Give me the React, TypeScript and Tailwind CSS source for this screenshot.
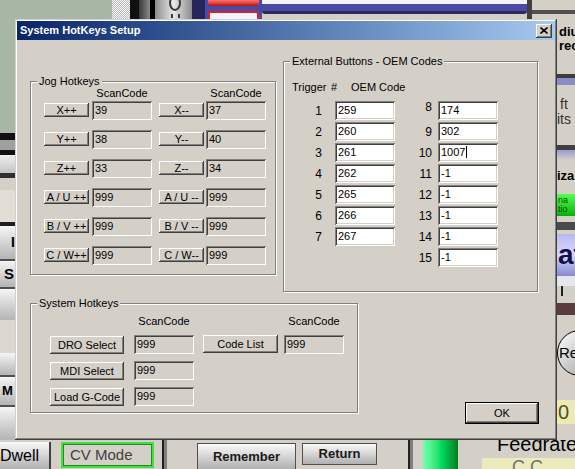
import type { ReactNode } from "react";

const raised =
  "shadow-[inset_-1px_-1px_0_#404040,inset_1px_1px_0_#ffffff,inset_-2px_-2px_0_#808080]";
const sunken =
  "shadow-[inset_1px_1px_0_#808080,inset_-1px_-1px_0_#ffffff,inset_2px_2px_0_#404040,inset_-2px_-2px_0_#d4d0c8]";

function Btn({ children, className = "" }: { children: ReactNode; className?: string }) {
  return (
    <button
      type="button"
      className={`flex shrink-0 items-center justify-center whitespace-nowrap bg-[#d4d0c8] text-[11px] leading-none text-black ${raised} ${className}`}
    >
      {children}
    </button>
  );
}

function Field({
  value,
  white = false,
  caret = false,
  className = "",
}: {
  value: string;
  white?: boolean;
  caret?: boolean;
  className?: string;
}) {
  return (
    <div
      className={`h-[19px] w-[60px] shrink-0 pl-[3px] text-[11px] leading-[19px] text-black ${
        white ? "bg-white" : "bg-[#d4d0c8]"
      } ${sunken} ${className}`}
    >
      {value}
      {caret && <span className="ml-px inline-block h-[12px] w-px bg-black align-[-2px]" />}
    </div>
  );
}

function GroupBox({
  label,
  className = "",
  children,
}: {
  label: string;
  className?: string;
  children: ReactNode;
}) {
  return (
    <div
      className={`relative shrink-0 border border-[#808080] shadow-[1px_1px_0_#ffffff,inset_1px_1px_0_#ffffff] ${className}`}
    >
      <span className="absolute -top-[7px] left-[6px] bg-[#d4d0c8] px-[2px] text-[11px] leading-[13px] whitespace-nowrap">
        {label}
      </span>
      {children}
    </div>
  );
}

const jogRows = [
  ["X++", "39", "X--", "37"],
  ["Y++", "38", "Y--", "40"],
  ["Z++", "33", "Z--", "34"],
  ["A / U ++", "999", "A / U --", "999"],
  ["B / V ++", "999", "B / V --", "999"],
  ["C / W++", "999", "C / W--", "999"],
];

const oemLeft = [
  ["1", "259"],
  ["2", "260"],
  ["3", "261"],
  ["4", "262"],
  ["5", "265"],
  ["6", "266"],
  ["7", "267"],
];

const oemRight = [
  ["8", "174"],
  ["9", "302"],
  ["10", "1007"],
  ["11", "-1"],
  ["12", "-1"],
  ["13", "-1"],
  ["14", "-1"],
  ["15", "-1"],
];

function TopStrip() {
  return (
    <div className="col-span-3 flex h-[19px] overflow-hidden">
      <div className="w-[112px] shrink-0 bg-[#a8b6a6]" />
      <div className="w-[18px] shrink-0 bg-[image:repeating-conic-gradient(#bdbdbd_0_25%,#f2f2f2_0_50%)] bg-[length:2px_2px]" />
      <div className="w-[9px] shrink-0 bg-[#111111]" />
      <div className="w-[11px] shrink-0 bg-linear-to-r from-[#3a3a3a] to-[#8a8a8a]" />
      <div className="w-[5px] shrink-0 bg-black" />
      <div className="w-[37px] shrink-0 bg-linear-to-r from-[#8c8c8c] via-[#e8e8e8] to-[#8c8c8c]">
        <svg width="37" height="19" viewBox="0 0 37 19">
          <ellipse cx="20" cy="3" rx="5" ry="7" fill="none" stroke="#3a3a3a" strokeWidth="2" />
          <rect x="16" y="14" width="2" height="4" fill="#3a3a3a" />
          <rect x="23" y="14" width="2" height="4" fill="#3a3a3a" />
        </svg>
      </div>
      <div className="w-[13px] shrink-0 bg-[#26265a]" />
      <div className="flex w-[57px] shrink-0 flex-col bg-[#4b4ba6] px-[3px]">
        <div className="h-[6px] rounded-b-[3px] bg-linear-to-b from-[#ff7070] to-[#c00000]" />
        <div className="mt-[5px] h-[8px] rounded-t-[3px] border-2 border-b-0 border-[#e02020] bg-[#f4f4ff]" />
      </div>
      <div className="flex w-[265px] shrink-0 flex-col">
        <div className="h-[4px] bg-[#f4f4f4]" />
        <div className="h-[7px] bg-[#4b4ba6]" />
        <div className="h-[3px] rounded-b-[3px] bg-[#2c2c5c]" />
        <div className="flex-1 bg-[#d4d0c8]" />
      </div>
      <div className="w-[5px] shrink-0 bg-[#404040]" />
      <div className="flex flex-1 flex-col bg-[#d4d0c8]">
        <div className="h-[10px]" />
        <div className="h-[4px] bg-[#505050]" />
      </div>
    </div>
  );
}

function LeftStrip() {
  const btn = "shrink-0 bg-linear-to-b from-[#f6f6f6] to-[#b4b4b4]";
  return (
    <div className="flex flex-col overflow-hidden whitespace-nowrap font-bold text-black">
      <div className="h-[114px] shrink-0 bg-[#a8b6a6]" />
      <div className="h-[7px] shrink-0 bg-[#111111]" />
      <div className="h-[10px] shrink-0 bg-[#a0a0a0]" />
      <div className="h-[5px] shrink-0 bg-[#111111]" />
      <div className="h-[18px] shrink-0 bg-linear-to-b from-[#eeeeee] to-[#c4c4c4]" />
      <div className="h-[5px] shrink-0 bg-[#303030]" />
      <div className="h-[12px] shrink-0 bg-[#d4d0c8]" />
      <div className="h-[32px] shrink-0 bg-[#e2ded6]" />
      <div className="h-[4px] shrink-0 bg-[#202020]" />
      <div className={`flex h-[33px] items-center justify-end text-[14px] ${btn}`}>I</div>
      <div className="h-[2px] shrink-0 bg-[#505050]" />
      <div className={`flex h-[26px] items-center pl-[4px] text-[15px] ${btn}`}>S</div>
      <div className="h-[2px] shrink-0 bg-[#505050]" />
      <div className={`h-[31px] ${btn}`} />
      <div className="h-[33px] shrink-0 bg-[#dcd8d0]" />
      <div className={`h-[22px] ${btn}`} />
      <div className="h-[2px] shrink-0 bg-[#505050]" />
      <div className={`flex h-[28px] items-center pl-[2px] text-[13px] ${btn}`}>M</div>
      <div className="h-[2px] shrink-0 bg-[#505050]" />
      <div className={`h-[33px] ${btn}`} />
    </div>
  );
}

function RightStrip() {
  return (
    <div className="flex flex-col overflow-hidden whitespace-nowrap bg-[#d4d0c8] text-black">
      <div className="h-[6px] shrink-0" />
      <div className="h-[14px] shrink-0 pl-[2px] text-[13px] font-bold leading-[14px]">diu</div>
      <div className="h-[14px] shrink-0 pl-[2px] text-[13px] font-bold leading-[14px]">rec</div>
      <div className="h-[21px] shrink-0" />
      <div className="h-[4px] shrink-0 bg-[#3c3c3c]" />
      <div className="h-[7px] shrink-0 bg-[#8c8cc8]" />
      <div className="h-[12px] shrink-0" />
      <div className="h-[14px] shrink-0 pl-[3px] text-[14px] leading-[14px] text-[#333333]">ft</div>
      <div className="h-[16px] shrink-0 text-[14px] leading-[16px] text-[#333333]">its</div>
      <div className="h-[18px] shrink-0" />
      <div className="h-[5px] shrink-0 bg-[#404040]" />
      <div className="h-[10px] shrink-0 bg-linear-to-b from-[#9a9ad0] to-[#d4d0c8]" />
      <div className="h-[8px] shrink-0" />
      <div className="h-[16px] shrink-0 text-[13px] font-bold leading-[16px]">iza</div>
      <div className="h-[10px] shrink-0" />
      <div className="flex h-[22px] shrink-0 flex-col justify-center bg-linear-to-b from-[#50ff50] to-[#00b000] pl-[1px] text-[9px] leading-[9px] text-[#005000]">
        <span>na</span>
        <span>tio</span>
      </div>
      <div className="h-[6px] shrink-0" />
      <div className="h-[8px] shrink-0 bg-[#4a4a4a]" />
      <div className="h-[4px] shrink-0" />
      <div className="flex h-[42px] shrink-0 items-center bg-linear-to-b from-[#b8b8f0] via-[#d8d8ff] to-[#8888d0] pl-[1px] text-[28px] font-bold text-[#101048]">
        at
      </div>
      <div className="h-[10px] shrink-0 bg-[#e6e6ec]" />
      <div className="flex h-[14px] shrink-0 items-start pl-[4px]">
        <div className="h-[10px] w-[2px] bg-[#202020]" />
      </div>
      <div className="h-[3px] shrink-0" />
      <div className="h-[12px] shrink-0 bg-[#5a3c3c]" />
      <div className="h-[13px] shrink-0" />
      <div className="flex h-[50px] shrink-0 items-center">
        <div className="flex h-[46px] w-[46px] shrink-0 items-center rounded-full border border-black bg-linear-to-br from-[#ffffff] to-[#9a9a9a] pl-[1px] text-[15px]">
          Re
        </div>
      </div>
      <div className="h-[22px] shrink-0" />
      <div className="flex h-[24px] shrink-0 items-center bg-[#ecebb4] pl-[1px] text-[20px] text-[#505020]">0</div>
      <div className="h-[16px] shrink-0" />
    </div>
  );
}

function BottomStrip() {
  const grad = "bg-linear-to-b from-[#fafafa] to-[#b0b0b0]";
  return (
    <div className="col-span-3 flex items-start overflow-hidden whitespace-nowrap bg-[#d4d0c8] text-black">
      <div className={`mt-[2px] flex h-[27px] w-[51px] shrink-0 items-center border-r-2 border-[#404040] text-[16px] ${grad}`}>
        Dwell
      </div>
      <div className="mt-[2px] ml-[10px] flex h-[26px] w-[93px] shrink-0 items-center border-2 border-[#40de40] pl-[7px] text-[15px] text-[#404040] shadow-[inset_1px_1px_0_#1e8e1e,inset_-1px_-1px_0_#1e8e1e]">
        CV Mode
      </div>
      <div className="ml-[8px] h-[29px] w-[2px] shrink-0 bg-[#202020]" />
      <div className="h-[29px] w-[3px] shrink-0 bg-[#808080]" />
      <div
        className={`mt-[3px] ml-[30px] flex h-[27px] w-[99px] shrink-0 items-center justify-center border border-[#505050] text-[13px] font-bold text-[#1a1a1a] ${grad}`}
      >
        Remember
      </div>
      <div
        className={`mt-[3px] ml-[6px] flex h-[22px] w-[75px] shrink-0 items-center justify-center border border-[#505050] text-[13px] font-bold text-[#1a1a1a] ${grad}`}
      >
        Return
      </div>
      <div className="ml-[31px] h-[29px] w-[2px] shrink-0 bg-[#202020]" />
      <div className="h-[29px] w-[3px] shrink-0 bg-[#808080]" />
      <div className="ml-[10px] h-[29px] w-[35px] shrink-0 bg-linear-to-r from-[#70ffb0] via-[#00e060] to-[#008020]" />
      <div className="ml-[24px] flex h-[29px] flex-1 flex-col">
        <div className="-mt-[6px] h-[20px] pl-[15px] text-[20px] leading-[20px]">Feedrate</div>
        <div className="mt-[4px] flex-1 bg-[#ecebbc] pl-[30px] text-[18px] leading-[18px] text-[#707070]">
          C.C
        </div>
      </div>
    </div>
  );
}

function Dialog() {
  return (
    <div className="flex flex-col bg-[#d4d0c8] p-[2px] text-black shadow-[inset_-1px_-1px_0_#404040,inset_1px_1px_0_#d4d0c8,inset_-2px_-2px_0_#808080,inset_2px_2px_0_#ffffff]">
      <div className="flex h-[19px] shrink-0 items-center justify-between bg-linear-to-r from-[#0a246a] to-[#a6caf0] pr-[3px] pl-[3px]">
        <span className="text-[11px] font-bold text-white">System HotKeys Setup</span>
        <button type="button" className={`flex h-[14px] w-[16px] items-center justify-center bg-[#d4d0c8] ${raised}`}>
          <svg width="8" height="7" viewBox="0 0 8 7">
            <path d="M0.5 0.5 L7.5 6.5 M7.5 0.5 L0.5 6.5" stroke="black" strokeWidth="1.6" />
          </svg>
        </button>
      </div>

      <div className="flex flex-1 flex-col">
        <div className="flex items-start pl-[13px]">
          <GroupBox label="Jog Hotkeys" className="mt-[41px] h-[194px] w-[246px] pt-[5px] pl-[13px]">
            <div className="flex text-[11px] leading-[13px]">
              <span className="ml-[48px] w-[60px] text-center">ScanCode</span>
              <span className="ml-[54px] w-[60px] text-center">ScanCode</span>
            </div>
            <div className="mt-[1px] flex flex-col gap-[10px]">
              {jogRows.map(([a, av, b, bv]) => (
                <div key={a} className="flex items-start">
                  <Btn className="mt-[2px] h-[14px] w-[45px]">{a}</Btn>
                  <Field value={av} className="ml-[3px]" />
                  <Btn className="mt-[2px] ml-[7px] h-[14px] w-[45px]">{b}</Btn>
                  <Field value={bv} className="ml-[2px]" />
                </div>
              ))}
            </div>
          </GroupBox>

          <GroupBox
            label="External Buttons - OEM Codes"
            className="mt-[21px] ml-[7px] h-[231px] w-[255px] pt-[19px] pl-[8px]"
          >
            <div className="flex text-[11px] leading-[13px]">
              <span className="w-[39px]">Trigger</span>
              <span className="w-[20px]">#</span>
              <span>OEM Code</span>
            </div>
            <div className="mt-[7px] flex items-start">
              <div className="flex flex-col gap-[2px]">
                {oemLeft.map(([n, v]) => (
                  <div key={n} className="flex items-center">
                    <span className="w-[30px] text-right text-[12px] leading-[14px]">{n}</span>
                    <Field value={v} white className="ml-[13px]" />
                  </div>
                ))}
              </div>
              <div className="ml-[7px] flex flex-col gap-[2px]">
                {oemRight.map(([n, v]) => (
                  <div key={n} className="flex items-center">
                    <span
                      className={`w-[30px] text-right text-[12px] ${
                        n === "8" ? "self-start leading-[13px]" : "leading-[14px]"
                      }`}
                    >
                      {n}
                    </span>
                    <Field value={v} white caret={n === "10"} className="ml-[6px]" />
                  </div>
                ))}
              </div>
            </div>
          </GroupBox>
        </div>

        <div className="mt-[11px] flex items-start pl-[13px]">
          <GroupBox label="System Hotkeys" className="h-[110px] w-[328px] pt-[11px] pl-[19px]">
            <div className="flex text-[11px] leading-[13px]">
              <span className="ml-[84px] w-[60px] text-center">ScanCode</span>
              <span className="ml-[90px] w-[60px] text-center">ScanCode</span>
            </div>
            <div className="mt-[7px] flex items-start">
              <div className="flex flex-col gap-[7px]">
                {["DRO Select", "MDI Select", "Load G-Code"].map((t) => (
                  <div key={t} className="flex items-start">
                    <Btn className="mt-[1px] h-[18px] w-[74px]">{t}</Btn>
                    <Field value="999" className="ml-[10px]" />
                  </div>
                ))}
              </div>
              <div className="ml-[9px] flex items-start">
                <Btn className="h-[18px] w-[75px]">Code List</Btn>
                <Field value="999" className="ml-[6px]" />
              </div>
            </div>
          </GroupBox>
          <Btn className="mt-[99px] ml-[107px] h-[22px] w-[74px] border border-black">OK</Btn>
        </div>
      </div>
    </div>
  );
}

export default function App() {
  return (
    <div className="grid h-[469px] w-[575px] grid-cols-[15px_542px_18px] grid-rows-[19px_421px_29px] overflow-hidden bg-[#d4d0c8] font-['Liberation_Sans',Arial,sans-serif]">
      <TopStrip />
      <LeftStrip />
      <Dialog />
      <RightStrip />
      <BottomStrip />
    </div>
  );
}
